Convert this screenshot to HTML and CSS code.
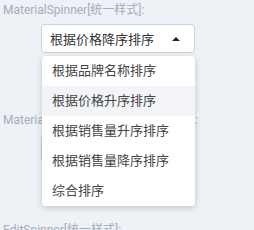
FILE: index.html
```html
<!DOCTYPE html>
<html lang="zh">
<head>
    <meta charset="UTF-8">
    <title>Spinner</title>
    <link rel="stylesheet" href="styles.css">
</head>
<body>
    <div class="section">
        <div class="label">MaterialSpinner[统一样式]:</div>
        <div class="spinner">
            <span class="spinner-text">根据价格降序排序</span>
            <span class="arrow"></span>
        </div>
        <ul class="dropdown">
            <li>根据品牌名称排序</li>
            <li class="selected">根据价格升序排序</li>
            <li>根据销售量升序排序</li>
            <li>根据销售量降序排序</li>
            <li>综合排序</li>
        </ul>
    </div>

    <div class="section">
        <div class="label">MaterialSpinner[统一样式, 带下划线]:</div>
        <div class="spinner">
            <span class="spinner-text">根据品牌名称排序</span>
            <span class="arrow down"></span>
        </div>
    </div>

    <div class="section">
        <div class="label">EditSpinner[统一样式]:</div>
    </div>
</body>
</html>
```

FILE: styles.css
```css
body {
    margin: 0;
    padding: 0 3px;
    background-color: #eef1f5;
    font-family: Roboto, "Noto Sans CJK SC", sans-serif;
}

.section {
    position: relative;
    height: 110px;
}

.label {
    font-size: 12px;
    line-height: 20px;
    color: #a4adba;
}

.spinner {
    display: flex;
    align-items: center;
    justify-content: space-between;
    box-sizing: border-box;
    width: 154px;
    height: 29px;
    margin: 4px 0 0 38px;
    padding: 0 14px 0 8px;
    background-color: white;
    border: 1px solid #cdd1d6;
    border-radius: 4px;
}

.spinner-text {
    font-size: 13px;
    color: #333;
}

.arrow {
    width: 0;
    height: 0;
    border-left: 4px solid transparent;
    border-right: 4px solid transparent;
    border-bottom: 4px solid #222;
}

.arrow.down {
    border-bottom: none;
    border-top: 4px solid #222;
}

/* popup list over the next section */
.dropdown {
    position: absolute;
    top: 56px;
    left: 39px;
    z-index: 2;
    width: 153px;
    margin: 0;
    padding: 0;
    list-style: none;
    background-color: white;
    border-radius: 4px;
    box-shadow: 0 2px 7px rgba(0,0,0,0.18);
}

.dropdown li {
    height: 30px;
    line-height: 30px;
    padding-left: 10px;
    font-size: 13px;
    color: #444;
}

.dropdown li.selected {
    background-color: #f2f4f7;
}
```
